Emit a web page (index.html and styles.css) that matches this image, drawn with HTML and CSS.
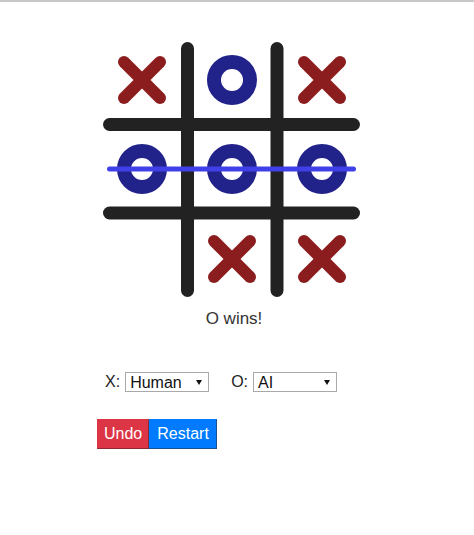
FILE: index.html
```html
<!DOCTYPE html>
<html>
<head>
<meta charset="utf-8">
<link rel="stylesheet" href="styles.css">
</head>
<body>
<div class="topbar"></div>
<div class="game">
  <svg class="board" width="270" height="270" viewBox="0 0 270 270">
    <g stroke="#222" stroke-width="13" stroke-linecap="round">
      <line x1="90.5" y1="13.5" x2="90.5" y2="255.5"/>
      <line x1="180" y1="13.5" x2="180" y2="255.5"/>
      <line x1="12.5" y1="89.5" x2="256.5" y2="89.5"/>
      <line x1="12.5" y1="178" x2="256.5" y2="178"/>
    </g>
    <g stroke="#8b1d1f" stroke-width="12" stroke-linecap="round">
      <line x1="27" y1="27" x2="63" y2="63"/><line x1="63" y1="27" x2="27" y2="63"/>
      <line x1="207" y1="27" x2="243" y2="63"/><line x1="243" y1="27" x2="207" y2="63"/>
      <line x1="117" y1="206" x2="153" y2="242"/><line x1="153" y1="206" x2="117" y2="242"/>
      <line x1="207" y1="206" x2="243" y2="242"/><line x1="243" y1="206" x2="207" y2="242"/>
    </g>
    <g stroke="#22228b" stroke-width="14" fill="none">
      <circle cx="135" cy="45" r="18"/>
      <circle cx="45" cy="134" r="18"/>
      <circle cx="135" cy="134" r="18"/>
      <circle cx="225" cy="134" r="18"/>
    </g>
    <line x1="12.5" y1="134" x2="256.5" y2="134" stroke="#4040e8" stroke-width="5" stroke-linecap="round"/>
  </svg>
  <div class="status">O wins!</div>
  <div class="players">
    <label class="player">X: <span class="sel"><select><option>Human</option><option>AI</option></select></span></label>
    <label class="player">O: <span class="sel"><select><option>AI</option><option>Human</option></select></span></label>
  </div>
  <div class="buttons"><button class="btn undo">Undo</button><button class="btn restart">Restart</button></div>
</div>
</body>
</html>
```
FILE: styles.css
```css
html, body {
  margin: 0;
  padding: 0;
  background: #fff;
}
body {
  font-family: "Liberation Sans", Arial, sans-serif;
  color: #222;
}
.topbar {
  height: 2px;
  background: #c8c8c8;
}
.game {
  margin-left: 97px;
  width: 270px;
  padding-top: 33px;
}
.board {
  display: block;
}
.status {
  margin-top: 4px;
  text-align: center;
  font-size: 17px;
  line-height: 20px;
  color: #333;
  padding-left: 4px;
}
.players {
  display: flex;
  margin-top: 43px;
  margin-left: 8px;
  gap: 22px;
  font-size: 16px;
  line-height: 20px;
  white-space: nowrap;
}
.player {
  display: flex;
  align-items: center;
  gap: 5px;
}
.sel {
  position: relative;
  display: inline-block;
}
.sel select {
  -webkit-appearance: none;
  appearance: none;
  width: 84px;
  height: 20px;
  margin: 0;
  padding: 0 0 0 4px;
  border: 1px solid #a9a9a9;
  border-radius: 0;
  background: #fff;
  font-family: "Liberation Sans", Arial, sans-serif;
  font-size: 16px;
  color: #111;
  display: block;
}
.sel::after {
  content: "";
  position: absolute;
  right: 7px;
  top: 8px;
  border-left: 3px solid transparent;
  border-right: 3px solid transparent;
  border-top: 5px solid #111;
  pointer-events: none;
}
.buttons {
  display: flex;
  margin-top: 27px;
}
.btn {
  margin: 0;
  height: 30px;
  padding: 0 6px;
  border: 1px solid;
  font-family: "Liberation Sans", Arial, sans-serif;
  font-size: 16px;
  color: #fff;
  cursor: pointer;
}
.undo {
  background: #dc3545;
  border-color: #dc3545 #8a2a33 #8a2a33 #dc3545;
}
.restart {
  background: #007bff;
  padding: 0 7px;
  border-color: #007bff #1d4f8a #1d4f8a #007bff;
}
```
